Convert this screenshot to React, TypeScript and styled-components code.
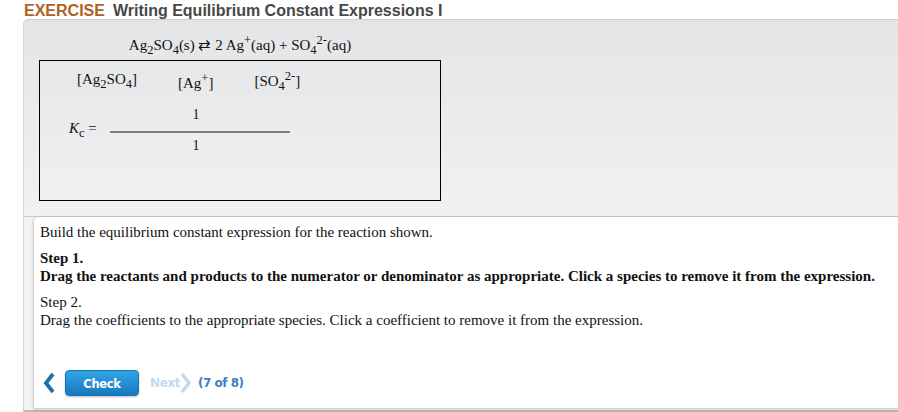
import React from "react";
import styled, { createGlobalStyle } from "styled-components";

const Global = createGlobalStyle`
  html, body { margin: 0; padding: 0; background: #fff; overflow: hidden; }
  body { width: 898px; height: 412px; }
`;

const Page = styled.div`
  padding: 0 0 0 23px;
  width: 900px;
`;

const Title = styled.div`
  font-family: "Liberation Sans", Arial, sans-serif;
  font-weight: bold;
  font-size: 16px;
  line-height: 20px;
  padding: 1px 0 0 1px;
  height: 19px;
  box-sizing: border-box;
  color: #474747;
  white-space: nowrap;
`;

const Tag = styled.span`
  color: #b0621f;
  margin-right: 8px;
`;

const Frame = styled.div`
  border-left: 1px solid #d6d6d6;
  border-bottom: 2px solid #b8b8b8;
  border-radius: 5px 0 0 0;
  background: #f4f4f4;
  height: 391px;
  display: flex;
  flex-direction: column;
`;

const TopPanel = styled.div`
  border-top: 1px solid #cdcdcd;
  border-bottom: 1px solid #c8c8c8;
  border-radius: 5px 0 0 0;
  background: linear-gradient(#e4e5e7, #f1f1f3);
  height: 198px;
  padding: 0 0 0 15px;
  box-sizing: border-box;
  font-family: "Liberation Serif", "Times New Roman", serif;
  color: #111;
`;

const Column = styled.div`
  width: 402px;
  display: flex;
  flex-direction: column;
`;

const Equation = styled.div`
  font-size: 15px;
  text-align: center;
  padding-top: 11px;
  height: 29px;
  box-sizing: content-box;
  line-height: 18px;
`;

const Box = styled.div`
  border: 1px solid #000;
  height: 141px;
  box-sizing: border-box;
  padding: 6px 0 0 37px;
  font-size: 15px;
`;

const Labels = styled.div`
  display: flex;
  gap: 41px;
  height: 28px;
  align-items: center;
`;

const KcRow = styled.div`
  display: flex;
  align-items: center;
  margin-left: -8px;
  margin-top: 13px;
`;

const Kc = styled.span`
  width: 41px;
  font-size: 15px;
  i { font-style: italic; }
`;

const Fraction = styled.div`
  width: 180px;
  display: flex;
  flex-direction: column;
  align-items: center;
  font-size: 14px;
`;

const FracLine = styled.div`
  width: 100%;
  height: 2px;
  background: #7d7d7d;
  margin: 9px 0 6px;
`;

const Num = styled.span`
  line-height: 14px;
  padding-right: 8px;
`;

const Card = styled.div`
  margin-left: 10px;
  flex: 1;
  background: #fff;
  border-radius: 5px 0 0 0;
  box-shadow: -1px 1px 3px rgba(0, 0, 0, 0.22);
  padding: 6px 0 0 6px;
  font-family: "Liberation Serif", "Times New Roman", serif;
  font-size: 15px;
  line-height: 18px;
  color: #111;
  display: flex;
  flex-direction: column;
  margin-bottom: 2px;
`;

const Para = styled.p<{ $bold?: boolean }>`
  margin: 0 0 8px;
  font-weight: ${(p) => (p.$bold ? "bold" : "normal")};
  white-space: nowrap;
`;

const Nav = styled.div`
  display: flex;
  align-items: center;
  margin-top: 33px;
  margin-left: 3px;
  font-family: "DejaVu Sans", Verdana, sans-serif;
  font-weight: bold;
  font-size: 12px;
`;

const CheckBtn = styled.button`
  width: 74px;
  height: 26px;
  margin-left: 10px;
  border: 1px solid #1674b5;
  border-radius: 4px;
  background: linear-gradient(#30a5e6, #1878c0);
  color: #fff;
  font-family: "DejaVu Sans", Verdana, sans-serif;
  font-weight: bold;
  font-size: 11.5px;
  letter-spacing: -0.3px;
  box-shadow: 0 1px 2px rgba(0, 0, 0, 0.25);
  padding: 2px 0 0;
`;

const NextText = styled.span`
  color: #c4d9ee;
  margin-left: 11px;
  letter-spacing: -0.4px;
`;

const Count = styled.span`
  color: #3f7fc4;
  margin-left: 6px;
  letter-spacing: -0.5px;
`;

const Chev = ({ dir, color }: { dir: "l" | "r"; color: string }) => (
  <svg width="12" height="22" viewBox="0 0 12 22" style={{ display: "block" }}>
    {dir === "l" ? (
      <path d="M10 2 L3 11 L10 20" stroke={color} strokeWidth="3.8" fill="none" strokeLinejoin="miter" />
    ) : (
      <path d="M2 2 L9 11 L2 20" stroke={color} strokeWidth="3.5" fill="none" strokeLinejoin="miter" />
    )}
  </svg>
);

export default function App() {
  return (
    <>
      <Global />
      <Page>
        <Title>
          <Tag>EXERCISE</Tag>Writing Equilibrium Constant Expressions I
        </Title>
        <Frame>
          <TopPanel>
            <Column>
              <Equation>
                Ag<sub>2</sub>SO<sub>4</sub>(s) ⇄ 2 Ag<sup>+</sup>(aq) + SO<sub>4</sub>
                <sup>2-</sup>(aq)
              </Equation>
              <Box>
                <Labels>
                  <span>
                    [Ag<sub>2</sub>SO<sub>4</sub>]
                  </span>
                  <span>
                    [Ag<sup>+</sup>]
                  </span>
                  <span>
                    [SO<sub>4</sub>
                    <sup>2-</sup>]
                  </span>
                </Labels>
                <KcRow>
                  <Kc>
                    <i>K</i>
                    <sub>c</sub> =
                  </Kc>
                  <Fraction>
                    <Num>1</Num>
                    <FracLine />
                    <Num>1</Num>
                  </Fraction>
                </KcRow>
              </Box>
            </Column>
          </TopPanel>
          <Card>
            <Para>Build the equilibrium constant expression for the reaction shown.</Para>
            <Para $bold>
              Step 1.
              <br />
              Drag the reactants and products to the numerator or denominator as appropriate. Click a species to remove it from the expression.
            </Para>
            <Para>
              Step 2.
              <br />
              Drag the coefficients to the appropriate species. Click a coefficient to remove it from the expression.
            </Para>
            <Nav>
              <Chev dir="l" color="#1d70aa" />
              <CheckBtn>Check</CheckBtn>
              <NextText>Next</NextText>
              <Chev dir="r" color="#c4d9ee" />
              <Count>(7 of 8)</Count>
            </Nav>
          </Card>
        </Frame>
      </Page>
    </>
  );
}
